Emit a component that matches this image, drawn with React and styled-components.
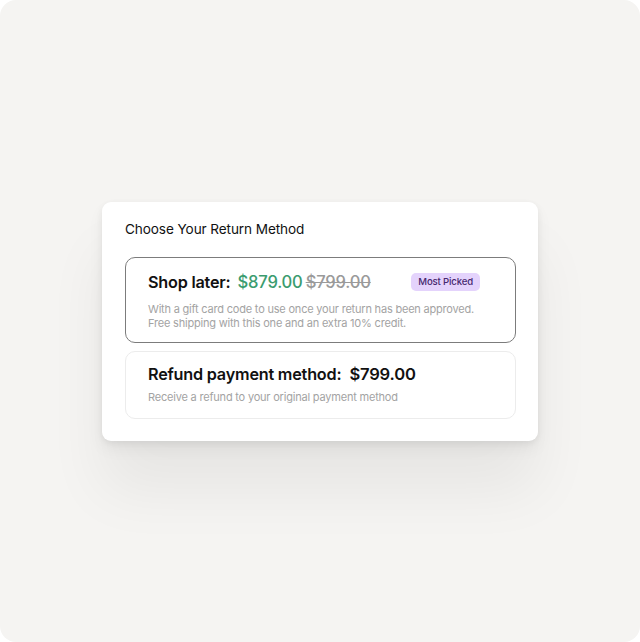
import React from 'react';
import styled, { createGlobalStyle } from 'styled-components';

const GlobalStyle = createGlobalStyle`
  html, body {
    margin: 0;
    padding: 0;
    background: #ffffff;
  }
  body {
    font-family: Inter, "Noto Sans", sans-serif;
    -webkit-font-smoothing: antialiased;
  }
`;

const Frame = styled.div`
  width: 640px;
  height: 642px;
  border-radius: 16px;
  background: #f5f4f2;
  display: flex;
  align-items: center;
  justify-content: center;
  overflow: hidden;
`;

const Card = styled.div`
  width: 436px;
  box-sizing: border-box;
  padding: 19px 22px 22px 23px;
  background: #ffffff;
  border-radius: 9px;
  box-shadow:
    0 2px 6px rgba(0, 0, 0, 0.06),
    0 8px 16px rgba(0, 0, 0, 0.05),
    0 50px 60px rgba(0, 0, 0, 0.06);
  display: flex;
  flex-direction: column;
`;

const Heading = styled.h2`
  margin: 0 0 19px;
  font-size: 13.6px;
  font-weight: 400;
  line-height: 17px;
  color: #111111;
  letter-spacing: -0.1px;
`;

const Options = styled.div`
  display: flex;
  flex-direction: column;
  gap: 8px;
`;

const Option = styled.div`
  border: 1px solid ${({ selected }) => (selected ? '#7c7c7c' : '#ececec')};
  border-radius: 10px;
  padding: ${({ selected }) => (selected ? '13px 22px 12px' : '11px 22px 14px')};
  display: flex;
  flex-direction: column;
`;

const TitleRow = styled.div`
  display: flex;
  align-items: center;
  justify-content: space-between;
`;

const Title = styled.div`
  font-size: 16.2px;
  font-weight: 600;
  line-height: 22px;
  color: #111111;
  letter-spacing: -0.2px;
  display: flex;
  align-items: baseline;
  gap: ${({ wide }) => (wide ? 8 : 7)}px;
`;

const Price = styled.span`
  font-size: 16.6px;
  color: ${({ tone }) => (tone === 'green' ? '#3b9c6f' : '#111111')};
  font-weight: ${({ tone }) => (tone === 'green' ? 500 : 600)};
`;

const OldPrice = styled.span`
  font-size: 16.6px;
  color: #9a9a9a;
  font-weight: 500;
  text-decoration: line-through;
  margin-left: -4px;
`;

const Badge = styled.span`
  background: #e4d3fc;
  color: #47286f;
  font-size: 9.6px;
  font-weight: 500;
  line-height: 18px;
  letter-spacing: -0.15px;
  padding: 0 7px;
  border-radius: 5px;
  margin-right: 13px;
`;

const Description = styled.p`
  margin: ${({ gapTop }) => gapTop}px 0 0;
  font-size: 11px;
  line-height: 14px;
  letter-spacing: -0.2px;
  color: #a3a3a3;
`;

export default function App() {
  return (
    <>
      <GlobalStyle />
      <Frame>
        <Card>
          <Heading>Choose Your Return Method</Heading>
          <Options>
            <Option selected>
              <TitleRow>
                <Title>
                  Shop later:
                  <Price tone="green">$879.00</Price>
                  <OldPrice>$799.00</OldPrice>
                </Title>
                <Badge>Most Picked</Badge>
              </TitleRow>
              <Description gapTop={9}>
                With a gift card code to use once your return has been approved.
                <br />
                Free shipping with this one and an extra 10% credit.
              </Description>
            </Option>
            <Option>
              <TitleRow>
                <Title wide>
                  Refund payment method:
                  <Price>$799.00</Price>
                </Title>
              </TitleRow>
              <Description gapTop={5}>
                Receive a refund to your original payment method
              </Description>
            </Option>
          </Options>
        </Card>
      </Frame>
    </>
  );
}
